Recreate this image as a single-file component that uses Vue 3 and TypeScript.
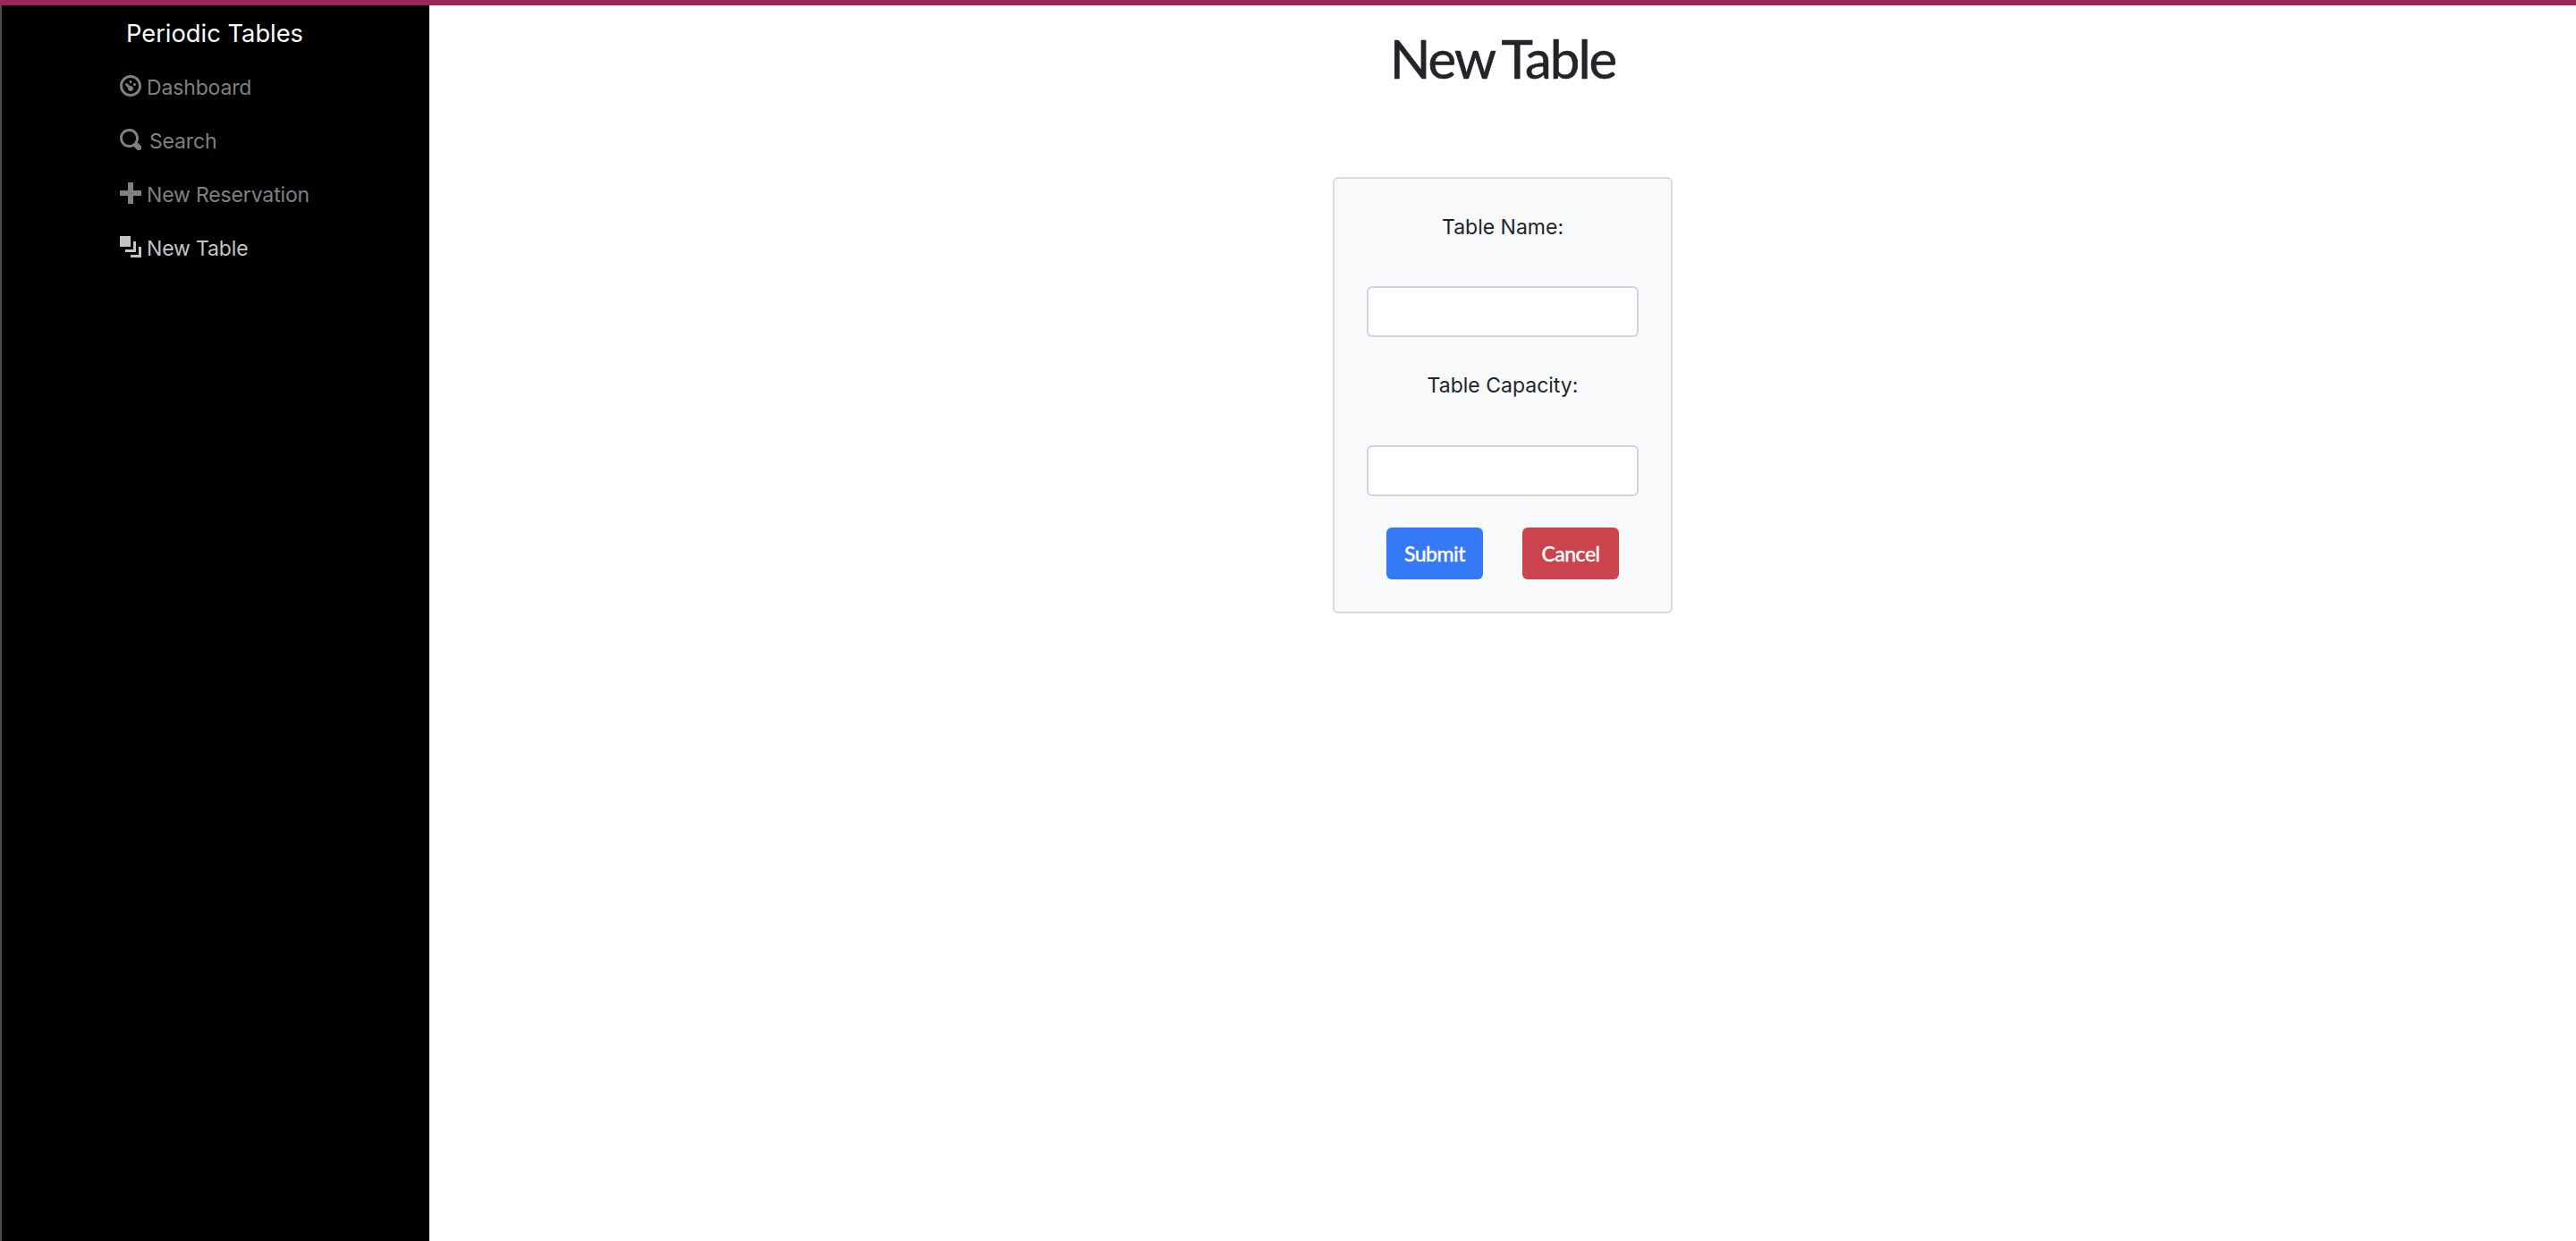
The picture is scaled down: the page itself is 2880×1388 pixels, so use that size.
<script setup lang="ts">
import { ref } from 'vue'

const links = [
  { label: 'Dashboard', icon: 'M4 0c-2.2 0-4 1.8-4 4s1.8 4 4 4 4-1.8 4-4-1.8-4-4-4zm0 1c1.66 0 3 1.34 3 3s-1.34 3-3 3-3-1.34-3-3 1.34-3 3-3zm0 1c-.28 0-.5.22-.5.5s.22.5.5.5.5-.22.5-.5-.22-.5-.5-.5zm-1.66 1a.5.5 0 0 0-.19.84l.91.91c-.02.08-.06.16-.06.25 0 .55.45 1 1 1s1-.45 1-1-.45-1-1-1c-.09 0-.17.04-.25.06l-.91-.91a.5.5 0 0 0-.44-.16.5.5 0 0 0-.06 0zm3.16 0c-.28 0-.5.22-.5.5s.22.5.5.5.5-.22.5-.5-.22-.5-.5-.5z' },
  { label: 'Search', icon: 'M3.5 0c-1.93 0-3.5 1.57-3.5 3.5s1.57 3.5 3.5 3.5c.59 0 1.17-.14 1.66-.41a1 1 0 0 0 .13.13l1 1a1.02 1.02 0 1 0 1.44-1.44l-1-1a1 1 0 0 0-.16-.13c.27-.49.44-1.06.44-1.66 0-1.93-1.57-3.5-3.5-3.5zm0 1c1.39 0 2.5 1.11 2.5 2.5 0 .66-.24 1.27-.66 1.72-.01.01-.02.02-.03.03a1 1 0 0 0-.13.13c-.44.4-1.04.63-1.69.63-1.39 0-2.5-1.11-2.5-2.5s1.11-2.5 2.5-2.5z' },
  { label: 'New Reservation', icon: 'M3 0v3h-3v2h3v3h2v-3h3v-2h-3v-3h-2z' },
  { label: 'New Table', icon: 'M0 0v4h4v-4h-4zm5 2v3h-3v1h4v-4h-1zm2 2v3h-3v1h4v-4h-1z', active: true },
]

const tableName = ref('')
const capacity = ref('')
</script>

<template>
  <div class="page">
    <aside class="sidebar">
      <div class="brand">Periodic Tables</div>
      <nav class="nav">
        <a v-for="link in links" :key="link.label" class="nav-link" :class="{ active: link.active, search: link.label === 'Search' }" href="#">
          <svg viewBox="0 0 8 8" width="24" height="24" fill="currentColor"><path :d="link.icon" /></svg>
          <span>{{ link.label }}</span>
        </a>
      </nav>
    </aside>
    <main class="content">
      <h1 class="title">New Table</h1>
      <form class="card" @submit.prevent>
        <label class="label" for="table_name">Table Name:</label>
        <input id="table_name" v-model="tableName" class="input" type="text" />
        <label class="label second" for="capacity">Table Capacity:</label>
        <input id="capacity" v-model="capacity" class="input" type="number" />
        <div class="actions">
          <button class="btn submit" type="submit">Submit</button>
          <button class="btn cancel" type="button">Cancel</button>
        </div>
      </form>
    </main>
  </div>
</template>

<style>
body {
  margin: 0;
  background: #fff;
}
</style>

<style scoped>
.page {
  display: flex;
  box-sizing: border-box;
  height: 1388px;
  border-top: 6px solid #9b2757;
  font-family: Inter, "Liberation Sans", sans-serif;
  overflow: hidden;
}

.sidebar {
  box-sizing: border-box;
  width: 480px;
  flex-shrink: 0;
  background: #000;
  border-left: 2px solid #4a4a4a;
}

.brand {
  margin-left: -2px;
  padding-top: 13px;
  height: 37px;
  line-height: 37px;
  text-align: center;
  color: #fff;
  font-size: 27.3px;
}

.nav {
  display: flex;
  flex-direction: column;
  padding-top: 12px;
  padding-left: 131.5px;
}

.nav-link {
  display: flex;
  align-items: center;
  gap: 6.5px;
  height: 60px;
  color: #808080;
  font-size: 23px;
  letter-spacing: -0.15px;
  text-decoration: none;
}

.nav-link svg {
  margin-bottom: 4px;
}

.nav-link.search {
  gap: 9.5px;
}

.nav-link.active {
  color: #c4c4c4;
}

.content {
  flex: 1;
  display: flex;
  flex-direction: column;
  align-items: center;
}

.title {
  margin: 26px 0 0;
  height: 66px;
  line-height: 66px;
  font-family: Lato, sans-serif;
  font-size: 60px;
  font-weight: 400;
  letter-spacing: -2px;
  word-spacing: -3px;
  -webkit-text-stroke: 0.6px #212529;
  color: #212529;
}

.card {
  box-sizing: border-box;
  display: flex;
  flex-direction: column;
  align-items: center;
  width: 380px;
  height: 488px;
  margin-top: 100px;
  padding: 36px 36px 0;
  background: #f8f9fa;
  border: 2px solid #d8dadc;
  border-radius: 6px;
}

.label {
  height: 36px;
  line-height: 36px;
  margin-bottom: 48px;
  font-size: 23px;
  color: #212529;
}

.label.second {
  margin-top: 36px;
  margin-bottom: 49px;
}

.input {
  box-sizing: border-box;
  width: 304px;
  height: 57px;
  background: #fff;
  border: 2px solid #ced4da;
  border-radius: 6px;
  outline: none;
}

.actions {
  display: flex;
  gap: 44px;
  margin-top: 35px;
}

.btn {
  width: 108px;
  height: 58px;
  border: none;
  border-radius: 6px;
  color: #fff;
  font-family: Lato, sans-serif;
  font-size: 23px;
  font-weight: 500;
  letter-spacing: -0.5px;
  -webkit-text-stroke: 0.3px #fff;
  cursor: pointer;
}

.submit {
  background: #3679f6;
}

.cancel {
  background: #cb444d;
}
</style>
